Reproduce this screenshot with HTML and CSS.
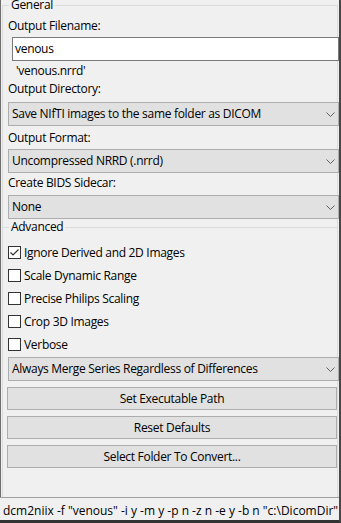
FILE: index.html
```html
<!DOCTYPE html>
<html lang="en">
<head>
    <meta charset="UTF-8">
    <title>dcm2niix</title>
    <link rel="stylesheet" href="styles.css">
</head>
<body>
    <div class="window">
        <div class="panel">
            <fieldset class="group general">
                <legend>General</legend>

                <div class="label first">Output Filename:</div>
                <div class="textbox">venous</div>
                <div class="hint">'venous.nrrd'</div>

                <div class="label">Output Directory:</div>
                <div class="combo wide">
                    <span>Save NIfTI images to the same folder as DICOM</span>
                    <svg class="arrow" width="9" height="5" viewBox="0 0 9 5"><polyline points="0.5,0.5 4.5,4.5 8.5,0.5" /></svg>
                </div>

                <div class="label">Output Format:</div>
                <div class="combo">
                    <span>Uncompressed NRRD (.nrrd)</span>
                    <svg class="arrow" width="9" height="5" viewBox="0 0 9 5"><polyline points="0.5,0.5 4.5,4.5 8.5,0.5" /></svg>
                </div>

                <div class="label tight">Create BIDS Sidecar:</div>
                <div class="combo">
                    <span>None</span>
                    <svg class="arrow" width="9" height="5" viewBox="0 0 9 5"><polyline points="0.5,0.5 4.5,4.5 8.5,0.5" /></svg>
                </div>
            </fieldset>

            <fieldset class="group advanced">
                <legend>Advanced</legend>

                <div class="checks">
                    <label class="check">
                        <span class="box"><svg width="11" height="11" viewBox="0 0 11 11"><polyline points="1.5,5.5 4,8 9.5,2.5" /></svg></span>
                        Ignore Derived and 2D Images
                    </label>
                    <label class="check"><span class="box"></span>Scale Dynamic Range</label>
                    <label class="check"><span class="box"></span>Precise Philips Scaling</label>
                    <label class="check"><span class="box"></span>Crop 3D Images</label>
                    <label class="check"><span class="box"></span>Verbose</label>
                </div>

                <div class="combo merge">
                    <span>Always Merge Series Regardless of Differences</span>
                    <svg class="arrow" width="9" height="5" viewBox="0 0 9 5"><polyline points="0.5,0.5 4.5,4.5 8.5,0.5" /></svg>
                </div>

                <div class="buttons">
                    <button>Set Executable Path</button>
                    <button>Reset Defaults</button>
                    <button>Select Folder To Convert...</button>
                </div>
            </fieldset>
        </div>

        <div class="status">dcm2niix -f "venous" -i y -m y -p n -z n -e y -b n "c:\DicomDir"</div>
    </div>
</body>
</html>
```

FILE: styles.css
```css
html, body {
    margin: 0;
    height: 523px;
    overflow: hidden;
    background-color: #f0f0f0;
    font-family: "Open Sans", "Noto Sans", sans-serif;
    font-size: 12px;
    color: #000;
}

.window {
    height: 523px;
    box-sizing: border-box;
    display: flex;
    flex-direction: column;
    border-right: 2px solid #474747;
    border-bottom: 3px solid #333;
}

.panel {
    flex: 1;
    display: flex;
    flex-direction: column;
    border-left: 1px solid #6e6e6e;
    overflow: hidden;
    letter-spacing: -0.3px;
}

.group {
    margin: 0 1px 0 1px;
    padding: 0 0 0 5px;
    border: 1px solid #dcdcdc;
    border-bottom: none;
    min-inline-size: 0;
}

.group legend {
    margin-left: 1px;
    padding: 0 2px;
    line-height: 16px;
}

.general {
    margin-top: -3px;
    padding-bottom: 8px;
}

.advanced {
    flex: 1;
    margin-top: -8px;
}

.label {
    line-height: 16px;
    margin-top: 4px;
}

.label.first {
    margin-top: 5px;
}

.label.tight {
    margin-top: 2px;
}

.textbox {
    height: 24px;
    box-sizing: border-box;
    margin: 3px -2px 0 4px;
    padding-left: 2px;
    line-height: 22px;
    background-color: #fff;
    border: 1px solid #7a7a7a;
}

.hint {
    line-height: 16px;
    margin: 2px 0 0 8px;
}

.hint + .label {
    margin-top: 2px;
}

.combo {
    height: 24px;
    box-sizing: border-box;
    margin: 3px -2px 0 0;
    padding: 0 3px 0 3px;
    display: flex;
    align-items: center;
    justify-content: space-between;
    line-height: 22px;
    background-color: #e1e1e1;
    border: 1px solid #adadad;
}

.combo.wide {
    margin-top: 5px;
}

.label.tight + .combo {
    margin-top: 4px;
}

.combo .arrow {
    fill: none;
    stroke: #606060;
    stroke-width: 1;
}

.checks {
    margin-top: 6px;
}

.check {
    display: flex;
    align-items: center;
    gap: 3px;
    height: 23px;
    line-height: 23px;
}

.box {
    width: 13px;
    height: 13px;
    box-sizing: border-box;
    background-color: #fff;
    border: 1px solid #333;
    display: flex;
}

.box svg {
    fill: none;
    stroke: #333;
    stroke-width: 1.2;
}

.merge {
    margin-top: 1px;
}

.buttons {
    margin: 6px 0 0 -1px;
    display: flex;
    flex-direction: column;
    gap: 6px;
}

button {
    height: 23px;
    padding: 0;
    font-family: inherit;
    font-size: 12px;
    letter-spacing: inherit;
    color: #000;
    background-color: #e1e1e1;
    border: 1px solid #adadad;
}

.status {
    height: 23px;
    box-sizing: border-box;
    padding: 2px 0 0 3px;
    line-height: 21px;
    border-top: 1px solid #a0a0a0;
    white-space: nowrap;
    overflow: hidden;
}
```
